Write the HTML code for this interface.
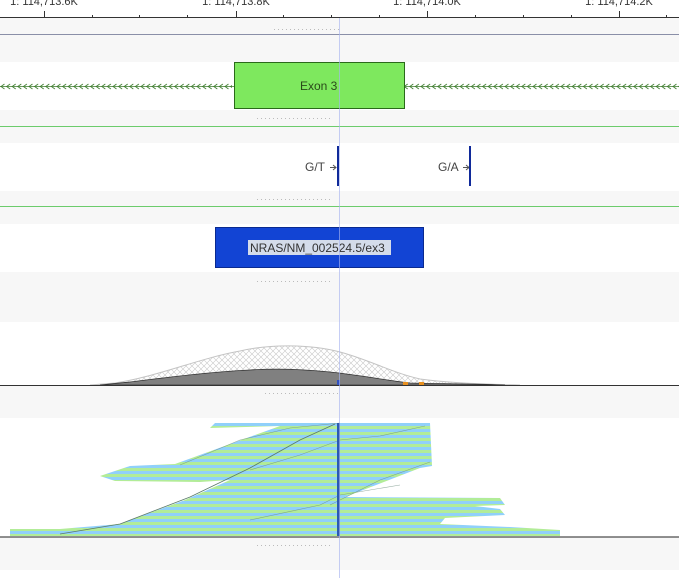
<!DOCTYPE html>
<html><head><meta charset="utf-8"><style>
html,body{margin:0;padding:0;background:#fff;width:679px;height:578px;overflow:hidden}
svg{display:block}
text{font-family:"Liberation Sans","DejaVu Sans",sans-serif}
</style></head><body>
<svg width="679" height="578" viewBox="0 0 679 578" xmlns="http://www.w3.org/2000/svg">
<defs>
<pattern id="st" width="4" height="6" patternUnits="userSpaceOnUse">
<rect width="4" height="3" fill="#b2ec98"/><rect y="3" width="4" height="3" fill="#90d0fa"/>
</pattern>
<pattern id="hx" width="6" height="6" patternUnits="userSpaceOnUse">
<rect width="6" height="6" fill="#fff"/>
<path d="M0 0L6 6M6 0L0 6" stroke="#c8c8c8" stroke-width="0.6"/>
</pattern>
<pattern id="ch" x="0" y="82" width="5.6" height="9" patternUnits="userSpaceOnUse">
<path d="M4.5 2L1 4.5L4.5 7" stroke="#3a7a2a" stroke-width="0.8" fill="none"/>
</pattern>
</defs>
<rect width="679" height="578" fill="#f7f7f7"/>
<rect x="0" y="0" width="679" height="18" fill="#fff"/>
<g font-size="11" fill="#333" text-anchor="middle">
<text x="44" y="5">1: 114,713.6K</text>
<text x="236" y="5">1: 114,713.8K</text>
<text x="427" y="5">1: 114,714.0K</text>
<text x="619" y="5">1: 114,714.2K</text>
</g>
<line x1="0" y1="17.5" x2="679" y2="17.5" stroke="#333"/>
<g stroke="#333">
<line x1="44.5" y1="11" x2="44.5" y2="18"/><line x1="236.5" y1="11" x2="236.5" y2="18"/><line x1="427.5" y1="11" x2="427.5" y2="18"/><line x1="619.5" y1="11" x2="619.5" y2="18"/>
<line x1="92.5" y1="15" x2="92.5" y2="18"/><line x1="139.5" y1="15" x2="139.5" y2="18"/><line x1="187.5" y1="15" x2="187.5" y2="18"/><line x1="283.5" y1="15" x2="283.5" y2="18"/><line x1="331.5" y1="15" x2="331.5" y2="18"/><line x1="379.5" y1="15" x2="379.5" y2="18"/><line x1="475.5" y1="15" x2="475.5" y2="18"/><line x1="523.5" y1="15" x2="523.5" y2="18"/><line x1="571.5" y1="15" x2="571.5" y2="18"/><line x1="666.5" y1="15" x2="666.5" y2="18"/>
</g>
<g stroke="#bbb" stroke-dasharray="1 3">
<line x1="274" y1="29.5" x2="340" y2="29.5"/>
<line x1="257" y1="118.5" x2="330" y2="118.5"/>
<line x1="257" y1="199.5" x2="330" y2="199.5"/>
<line x1="257" y1="281.5" x2="330" y2="281.5"/>
<line x1="265" y1="393.5" x2="340" y2="393.5"/>
<line x1="257" y1="545.5" x2="330" y2="545.5"/>
</g>
<line x1="0" y1="34.5" x2="679" y2="34.5" stroke="#8a8fa8"/>
<rect x="0" y="62" width="679" height="48" fill="#fff"/>
<line x1="0" y1="86.5" x2="679" y2="86.5" stroke="#3a7a2a" stroke-width="0.8"/>
<rect x="0" y="82" width="232" height="9" fill="url(#ch)"/>
<rect x="405" y="82" width="274" height="9" fill="url(#ch)"/>
<rect x="234.5" y="62.5" width="170" height="46" fill="#7ee85e" stroke="#2a6a1a"/>
<text x="300" y="90" font-size="12" fill="#2a4a1a">Exon 3</text>
<line x1="0" y1="126.5" x2="679" y2="126.5" stroke="#6ccc6c"/>
<rect x="0" y="143" width="679" height="48" fill="#fff"/>
<text x="305" y="171" font-size="12" fill="#444">G/T</text>
<text x="438" y="171" font-size="12" fill="#444">G/A</text>
<path d="M330 167.5h6M333 165l3 2.5-3 2.5M463 167.5h6M466 165l3 2.5-3 2.5" stroke="#555" fill="none"/>
<rect x="337" y="146" width="2" height="40" fill="#102a9a"/>
<rect x="469" y="146" width="2" height="40" fill="#102a9a"/>
<line x1="0" y1="206.5" x2="679" y2="206.5" stroke="#6ccc6c"/>
<rect x="0" y="224" width="679" height="48" fill="#fff"/>
<rect x="215.5" y="227.5" width="208" height="40" fill="#1244d4" stroke="#0a2a90"/>
<rect x="248" y="240" width="143" height="15" fill="#d4dcea"/>
<text x="250" y="252" font-size="12" fill="#333">NRAS/NM_002524.5/ex3</text>
<rect x="0" y="322" width="679" height="64" fill="#fff"/>
<path d="M90 385L115 383C160 376 200 358 240 351C270 344 310 344 340 352C370 360 390 372 420 379C450 383 480 384 520 385Z" fill="url(#hx)" stroke="#c4c4c4"/>
<path d="M100 385L130 382C170 377 210 372 250 370C280 368 310 370 330 372C360 375 390 381 410 383C450 384 480 384 505 385Z" fill="#808080" stroke="#333" stroke-width="0.8"/>
<line x1="0" y1="385.5" x2="679" y2="385.5" stroke="#333"/>
<rect x="337" y="380" width="3" height="5" fill="#3050c0"/>
<rect x="403" y="382" width="5" height="3" fill="#e89020"/>
<rect x="419" y="382" width="5" height="3" fill="#e89020"/>
<rect x="0" y="418" width="679" height="119" fill="#fff"/>
<path d="M210 428L215 423L430 423L432 466L420 468L345 497L500 498L505 505L475 506L500 509L505 515L445 518L440 524L510 527L560 530L560 536L10 536L10 529L60 529L120 524L185 500L230 480L200 482L115 481L100 476L130 466L175 464L233 443L280 426Z" fill="url(#st)"/>
<path d="M60 534L120 524L190 497L250 468L300 440L335 424" stroke="#5a7a6a" stroke-width="0.8" fill="none"/>
<path d="M180 465L240 440L290 428L340 423M250 470L300 455L340 440L380 436L425 426M250 520L320 505L340 495L400 485M330 505L380 480L430 462" stroke="#6a8a7a" stroke-width="0.6" fill="none" opacity="0.7"/>
<rect x="337" y="423" width="3" height="113" fill="#2a5ab0"/>
<line x1="0" y1="537" x2="679" y2="537" stroke="#222"/>
<rect x="0" y="570" width="679" height="8" fill="#fff"/>
<line x1="339.5" y1="18" x2="339.5" y2="578" stroke="#a8b4f0" stroke-width="0.8" opacity="0.8"/>
</svg>
</body></html>
